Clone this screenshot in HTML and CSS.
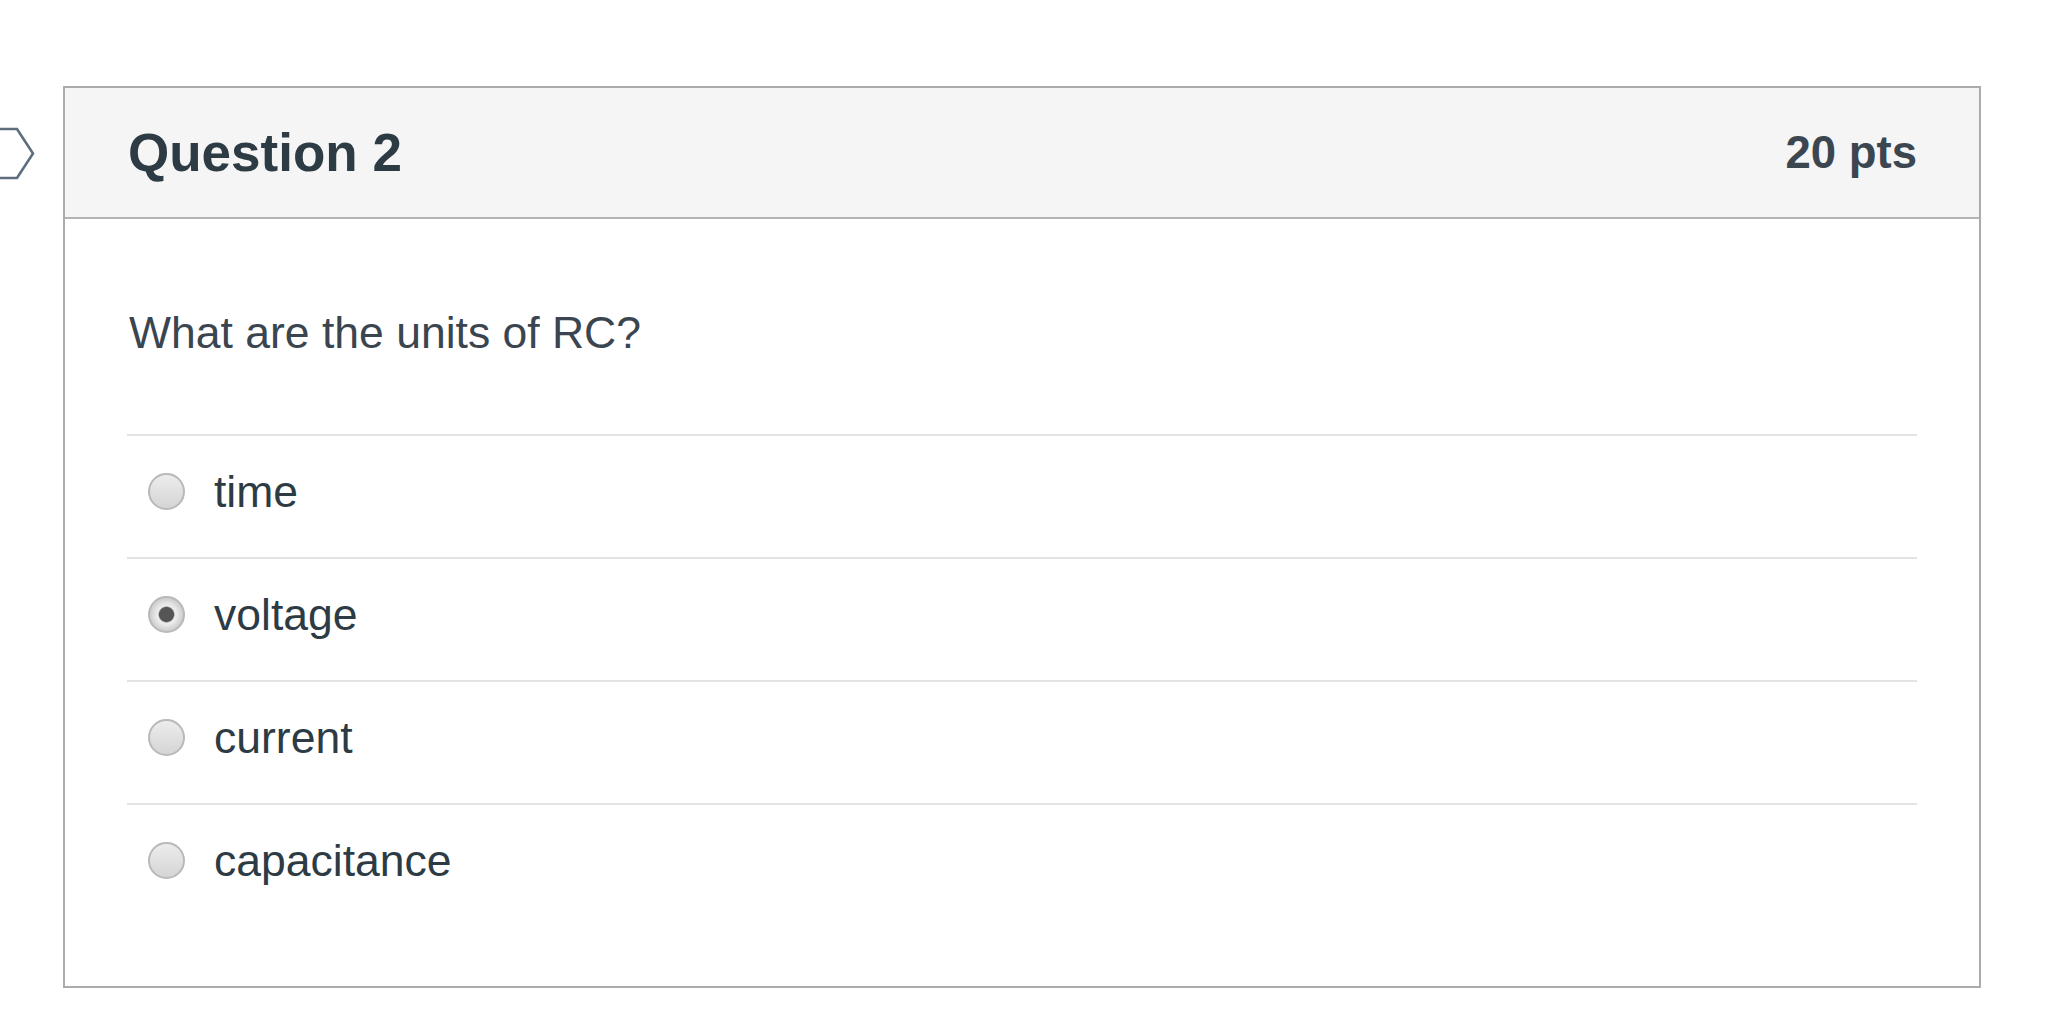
FILE: index.html
```html
<!DOCTYPE html>
<html lang="en">
<head>
<meta charset="utf-8">
<title>Question 2</title>
<link rel="stylesheet" href="styles.css">
</head>
<body>
<div class="page">
  <div class="marker">
    <svg class="marker-icon" width="40" height="60" viewBox="0 0 40 60">
      <polyline points="-10,6 17,6 33,30.5 17,55 -10,55" fill="none" stroke="#5f6e7c" stroke-width="2.6" stroke-linejoin="miter"/>
    </svg>
  </div>
  <div class="question">
    <div class="q-header">
      <h2 class="q-title">Question 2</h2>
      <div class="q-points">20 pts</div>
    </div>
    <div class="q-body">
      <p class="q-text">What are the units of RC?</p>
      <div class="answers">
        <div class="answer"><span class="radio"></span><span class="label">time</span></div>
        <div class="answer"><span class="radio checked"></span><span class="label">voltage</span></div>
        <div class="answer"><span class="radio"></span><span class="label">current</span></div>
        <div class="answer"><span class="radio"></span><span class="label">capacitance</span></div>
      </div>
    </div>
  </div>
</div>
</body>
</html>
```

FILE: styles.css
```css
html, body {
  margin: 0;
  padding: 0;
  background: #ffffff;
}

body {
  font-family: "Liberation Sans", Arial, Helvetica, sans-serif;
  color: #2d3b45;
}

.page {
  display: flex;
  align-items: flex-start;
  padding-top: 86px;
}

.marker {
  width: 63px;
  flex-shrink: 0;
}

.marker-icon {
  display: block;
  margin-top: 37px;
}

.question {
  width: 1918px;
  box-sizing: border-box;
  border: 2px solid #ababab;
  flex-shrink: 0;
}

.q-header {
  height: 131px;
  box-sizing: border-box;
  background: #f5f5f5;
  border-bottom: 2px solid #b3b3b3;
  display: flex;
  align-items: center;
  justify-content: space-between;
  padding: 1px 62px 0 63px;
}

.q-title {
  margin: 0;
  font-size: 53px;
  font-weight: bold;
  line-height: 1.2;
  color: #2d3b45;
}

.q-points {
  font-size: 45.5px;
  font-weight: bold;
  line-height: 1.2;
  color: #3c4650;
}

.q-body {
  padding: 87px 62px 60px 62px;
}

.q-text {
  margin: 0 0 75px 0;
  padding-left: 2px;
  font-size: 44.5px;
  line-height: 1.2;
  color: #3a4550;
}

.answer {
  height: 123px;
  box-sizing: border-box;
  border-top: 2px solid #e3e3e3;
  display: flex;
  align-items: center;
  padding-bottom: 10px;
}

.radio {
  width: 37px;
  height: 37px;
  box-sizing: border-box;
  border-radius: 50%;
  margin-left: 21px;
  border: 2px solid #b9b9b9;
  background: linear-gradient(#ececec, #d5d5d5);
  flex-shrink: 0;
}

.radio.checked {
  background: radial-gradient(circle, #555555 0, #555555 7px, #eeeeee 8.5px, #e6e6e6 11px, #cfcfcf 16px);
}

.label {
  margin-left: 29px;
  font-size: 44.5px;
  line-height: 1.2;
  color: #2d3b45;
}
```
